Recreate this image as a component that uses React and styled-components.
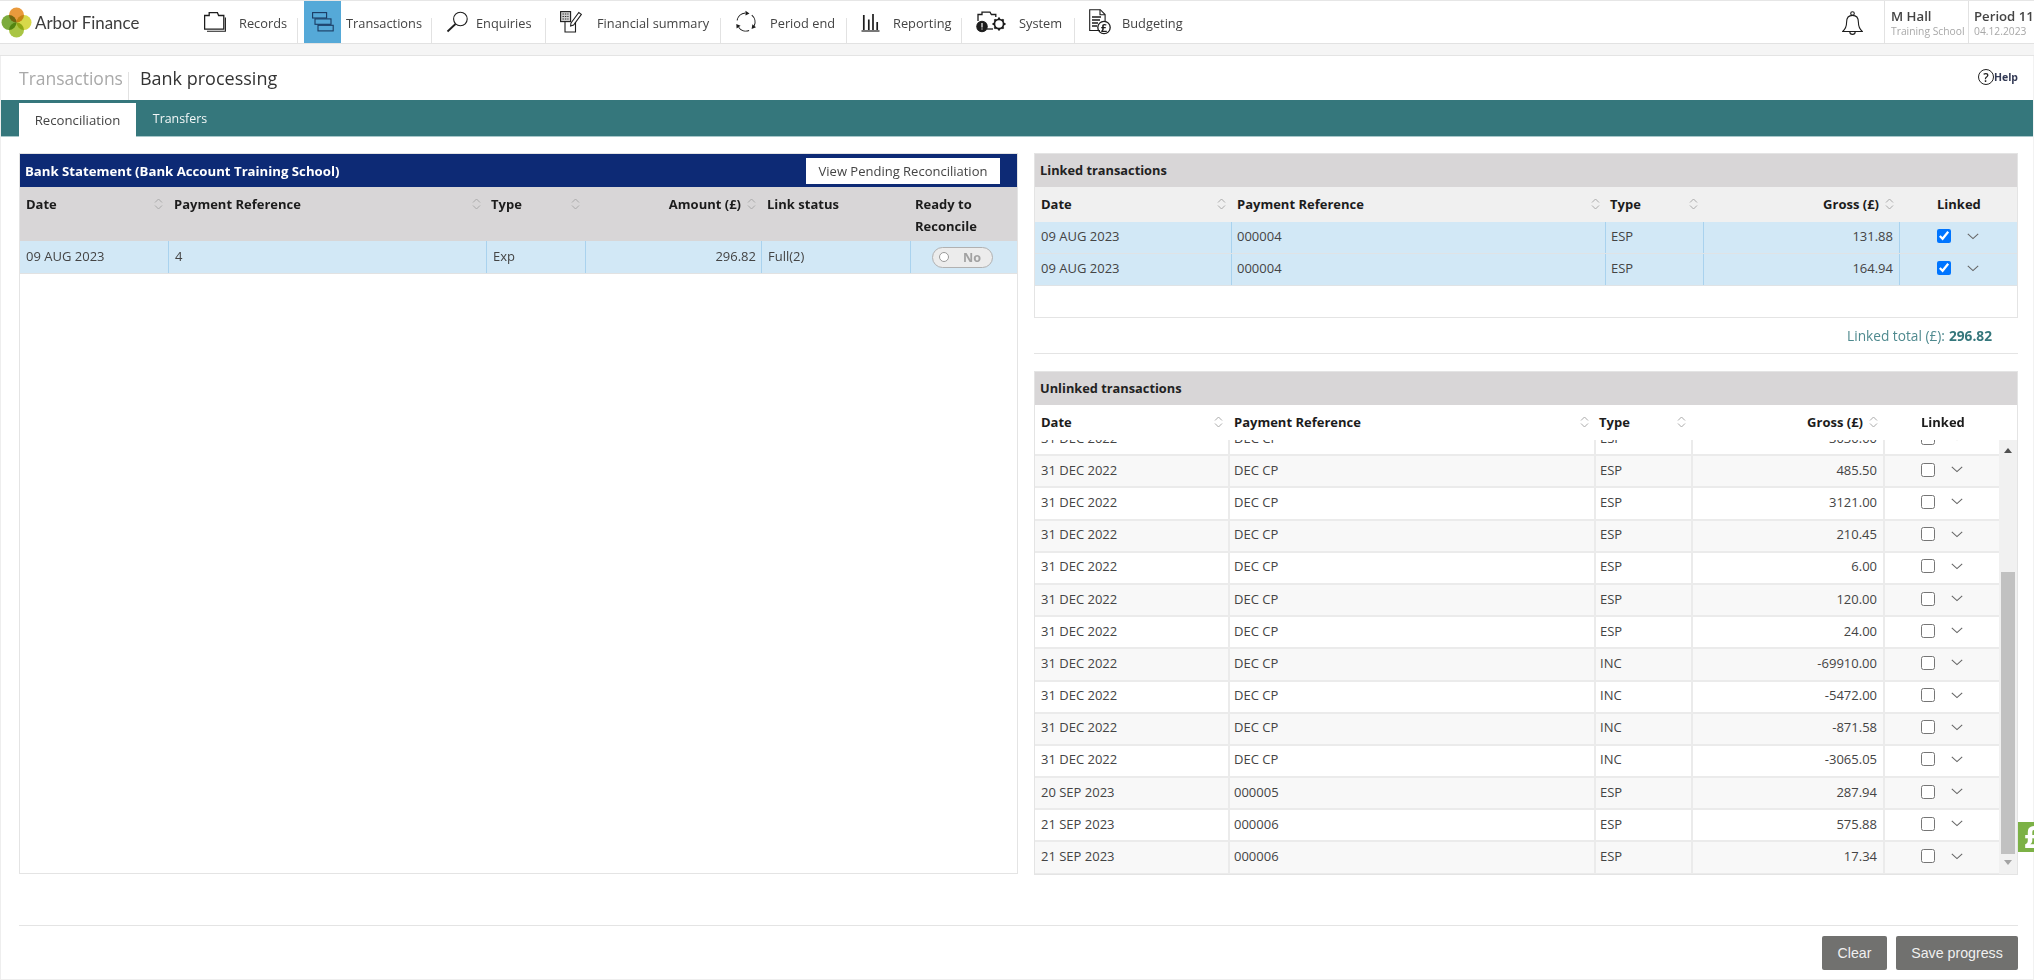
import React from "react";
import styled, { createGlobalStyle } from "styled-components";

const Global = createGlobalStyle`
  html, body { margin: 0; padding: 0; background: #fff; }
  body { font-family: "Open Sans", "Noto Sans", sans-serif; font-size: 13px; color: #333; }
  * { box-sizing: border-box; }
`;

const Page = styled.div`
  position: relative;
  width: 2034px;
  height: 980px;
  overflow: hidden;
  display: flex;
  flex-direction: column;
`;

/* ---------- top navigation ---------- */
const TopBar = styled.header`
  height: 44px;
  flex: none;
  display: flex;
  background: #fff;
  border-top: 1px solid #e6e6e6;
  border-bottom: 1px solid #e2e2e2;
`;
const Brand = styled.div`
  width: 190px;
  flex: none;
  display: flex;
  align-items: center;
  gap: 3px;
  padding-left: 1px;
  font-family: "Lato", "Open Sans", sans-serif;
  font-size: 16.9px;
  color: #3d3d3d;
`;
const NavItem = styled.div`
  width: ${(p) => p.$w}px;
  flex: none;
  height: 42px;
  display: flex;
  align-items: center;
  gap: ${(p) => p.$gap ?? 13}px;
  padding-left: ${(p) => p.$pad ?? 14}px;
  position: relative;
  font-size: 12.8px;
  color: #444;
  white-space: nowrap;
  &::after {
    content: "";
    display: ${(p) => (p.$last ? "none" : "block")};
    position: absolute;
    right: 0;
    top: 17px;
    bottom: 0;
    width: 1px;
    background: #e2e2e2;
  }
`;
const NavLabel = styled.span`
  padding-top: 2px;
`;
const ActiveIcon = styled.span`
  width: 37px;
  height: 42px;
  background: #55a9d8;
  display: flex;
  align-items: center;
  justify-content: center;
`;
const Spacer = styled.div`
  flex: 1;
`;
const BellBox = styled.div`
  width: 42px;
  display: flex;
  align-items: center;
  justify-content: flex-start;
  padding-top: 3px;
`;
const UserBlock = styled.div`
  width: ${(p) => p.$w}px;
  flex: none;
  border-left: 1px solid #e2e2e2;
  padding: 6px 0 0 ${(p) => p.$pad}px;
  display: flex;
  flex-direction: column;
  white-space: nowrap;
`;
const UserName = styled.span`
  font-size: 13.2px;
  font-weight: 600;
  line-height: 18px;
  color: #444;
`;
const UserSub = styled.span`
  font-size: 10.3px;
  line-height: 12px;
  color: #a8a8a8;
`;
const Band = styled.div`
  height: 12px;
  flex: none;
  background: #f5f5f5;
  border-bottom: 1px solid #e4e4e4;
`;

/* ---------- title + tabs ---------- */
const Content = styled.div`
  flex: 1;
  display: flex;
  flex-direction: column;
  border-left: 1px solid #eee;
  border-right: 1px solid #f2f2f2;
  border-bottom: 1px solid #eee;
`;
const TitleRow = styled.div`
  height: 44px;
  flex: none;
  display: flex;
  align-items: flex-end;
  padding: 0 15px 0 18px;
`;
const Crumb = styled.span`
  font-size: 17.5px;
  line-height: 13px;
  height: 28px;
  color: #a9a9a9;
  border-right: 1px solid #e2e2e2;
  padding-right: 5px;
`;
const PageTitle = styled.h1`
  margin: 0 0 0 11px;
  font-size: 18px;
  line-height: 13px;
  height: 28px;
  font-weight: 400;
  color: #333;
`;
const Help = styled.div`
  margin-left: auto;
  align-self: flex-end;
  margin-bottom: 15px;
  display: flex;
  align-items: center;
  font-family: "Open Sans", sans-serif;
  font-weight: 700;
  font-size: 10.5px;
  color: #333a55;
`;
const HelpMark = styled.span`
  width: 16px;
  height: 16px;
  border: 1.5px solid #222;
  border-radius: 50%;
  display: flex;
  align-items: center;
  justify-content: center;
  font-size: 12px;
  font-weight: 600;
  color: #222;
`;
const TabBar = styled.nav`
  height: 37px;
  flex: none;
  background: #35777c;
  border-bottom: 1px solid #a8c8ca;
  padding: 3px 0 0 18px;
  display: flex;
`;
const Tab = styled.div`
  width: ${(p) => p.$w}px;
  height: 34px;
  display: flex;
  align-items: center;
  justify-content: center;
  font-size: ${(p) => (p.$active ? 13.2 : 12.4)}px;
  padding-bottom: ${(p) => (p.$active ? 0 : 4)}px;
  background: ${(p) => (p.$active ? "#fff" : "transparent")};
  color: ${(p) => (p.$active ? "#444" : "#f2f7f7")};
`;

/* ---------- panels ---------- */
const Main = styled.main`
  flex: 1;
  display: grid;
  grid-template-columns: 999px 984px;
  column-gap: 16px;
  padding: 16px 15px 0 18px;
  align-content: start;
`;
const LeftPanel = styled.section`
  height: 721px;
  border: 1px solid #e4e4e4;
  background: #fff;
`;
const RightColumn = styled.div`
  display: flex;
  flex-direction: column;
`;
const Panel = styled.section`
  border: 1px solid #e4e4e4;
  height: ${(p) => p.$h}px;
  background: #fff;
  overflow: hidden;
`;
const PanelTitle = styled.div`
  height: ${(p) => p.$h || 33}px;
  display: flex;
  align-items: center;
  justify-content: space-between;
  padding: 0 17px ${(p) => (p.$navy ? 0 : 2)}px 5px;
  background: ${(p) => (p.$navy ? "#0d2a75" : "#d8d6d7")};
  color: ${(p) => (p.$navy ? "#fff" : "#222")};
  font-weight: 700;
  font-size: ${(p) => (p.$navy ? 13.2 : 12.8)}px;
`;
const PendingButton = styled.button`
  width: 194px;
  height: 26px;
  border: 0;
  background: #fff;
  color: #444;
  font: 400 13px "Open Sans", sans-serif;
  padding: 0;
`;
const HeadRow = styled.div`
  display: grid;
  grid-template-columns: ${(p) => p.$cols};
  height: ${(p) => p.$h}px;
  background: ${(p) => p.$bg};
`;
const HeadCell = styled.div`
  display: flex;
  align-items: flex-start;
  justify-content: ${(p) => (p.$right ? "flex-end" : "space-between")};
  gap: 6px;
  padding: 6px 5px 0 ${(p) => p.$pad ?? 6}px;
  font-weight: 700;
  font-size: 13px;
  line-height: 22px;
  color: #1c1c1c;
  white-space: ${(p) => (p.$wrap ? "normal" : "nowrap")};
`;
const CenterHead = styled(HeadCell)`
  padding-left: 38px;
  justify-content: flex-start;
`;
const Row = styled.div`
  display: grid;
  grid-template-columns: ${(p) => p.$cols};
  height: ${(p) => p.$h}px;
  align-items: stretch;
  background: ${(p) => p.$bg};
  border-bottom: ${(p) => p.$lineW ?? 1}px solid ${(p) => p.$line};
`;
const Cell = styled.div`
  display: flex;
  align-items: center;
  justify-content: ${(p) => (p.$right ? "flex-end" : "flex-start")};
  padding: 0 ${(p) => p.$rpad ?? 6}px 3px ${(p) => p.$pad ?? 6}px;
  border-left: ${(p) => (p.$first ? "0" : `${p.$sepW ?? 1}px solid ${p.$sep}`)};
  font-size: 13px;
  color: #444;
  white-space: nowrap;
`;
const ToggleCell = styled(Cell)`
  padding-left: 21px;
  padding-bottom: 0;
`;
const Toggle = styled.span`
  width: 61px;
  height: 21px;
  border: 1.5px solid #b1b1b1;
  border-radius: 11px;
  background: #ececec;
  display: flex;
  align-items: center;
  gap: 14px;
  padding-left: 6px;
  font-weight: 700;
  font-size: 12.6px;
  color: #a2a2a2;
`;
const Knob = styled.i`
  width: 10px;
  height: 10px;
  border-radius: 50%;
  border: 1.5px solid #9a9a9a;
  background: #fff;
`;
const ActionCell = styled(Cell)`
  padding-left: ${(p) => (p.$sepW ? 36 : 37)}px;
  gap: 16px;
`;
const Check = styled.input.attrs({ type: "checkbox", readOnly: true })`
  width: 14px;
  height: 14px;
  margin: 0;
`;
const TotalRow = styled.div`
  height: 36px;
  flex: none;
  border-bottom: 1px solid #e4e4e4;
  display: flex;
  align-items: center;
  justify-content: flex-end;
  padding: 0 26px 0 0;
  font-size: 13.7px;
  color: #4f8a8f;
  margin-bottom: 17px;
`;
const TotalValue = styled.b`
  color: #35777c;
  margin-left: 4px;
`;
const Scroller = styled.div`
  display: flex;
  height: 436px;
`;
const RowsClip = styled.div`
  flex: 1;
  overflow: hidden;
`;
const Rows = styled.div`
  margin-top: -16px;
`;
const Track = styled.div`
  width: 18px;
  flex: none;
  background: #f1f1f1;
  display: flex;
  flex-direction: column;
  align-items: center;
  padding-top: 8px;
`;
const ArrowUp = styled.i`
  border-left: 4px solid transparent;
  border-right: 4px solid transparent;
  border-bottom: 5px solid #505050;
`;
const ArrowDown = styled.i`
  border-left: 4px solid transparent;
  border-right: 4px solid transparent;
  border-top: 5px solid #a3a3a3;
  margin-top: 6px;
`;
const Thumb = styled.div`
  width: 14px;
  height: 282px;
  background: #c1c1c1;
  margin-top: 119px;
`;
const Footer = styled.footer`
  margin: 0 15px 0 18px;
  flex: none;
  height: 54px;
  border-top: 1px solid #e4e4e4;
  padding-top: 10px;
  display: flex;
  justify-content: flex-end;
  gap: 9px;
`;
const FooterButton = styled.button`
  width: ${(p) => p.$w}px;
  height: 34px;
  border: 0;
  border-radius: 2px;
  background: #71716f;
  color: #f0f0f0;
  font: 400 14.2px "Liberation Sans", Arial, sans-serif;
  padding: 0;
`;
const MoneyTab = styled.div`
  position: absolute;
  right: 0;
  top: 822px;
  width: 16px;
  height: 30px;
  background: #7cb146;
  color: #fff;
  font: 700 30px/30px "Open Sans", sans-serif;
  padding-left: 6px;
  overflow: hidden;
`;

/* ---------- drawings ---------- */
const Sort = () => (
  <svg width="9" height="12" viewBox="0 0 9 12" fill="none" stroke="#aaa" strokeWidth="1" style={{ flex: "none", marginTop: 5 }}>
    <path d="M1 4.5 4.5 1 8 4.5M1 7.5 4.5 11 8 7.5" />
  </svg>
);
const Chevron = () => (
  <svg width="12" height="7" viewBox="0 0 12 7" fill="none" stroke="#666" strokeWidth="1.1">
    <path d="M.8.8 6 5.6 11.2.8" />
  </svg>
);
const Logo = () => (
  <svg width="31" height="31" viewBox="0 0 31 31" style={{ flex: "none" }}>
    <g style={{ mixBlendMode: "multiply" }}>
      <circle cx="15.5" cy="8" r="7.5" fill="#ea9a3c" />
    </g>
    <g style={{ mixBlendMode: "multiply" }}>
      <circle cx="8" cy="15.5" r="7.5" fill="#7cab3c" />
    </g>
    <g style={{ mixBlendMode: "multiply" }}>
      <circle cx="23" cy="15.5" r="7.5" fill="#d7d84a" />
    </g>
    <g style={{ mixBlendMode: "multiply" }}>
      <circle cx="15.5" cy="23" r="7.5" fill="#a9c544" />
    </g>
  </svg>
);
const Ic = (w, h, children) => (
  <svg width={w} height={h} viewBox={`0 0 ${w} ${h}`} fill="none" stroke="#1d1d1d" strokeWidth="1.1" style={{ flex: "none" }}>
    {children}
  </svg>
);
const RecordsIcon = () =>
  Ic(22, 20, <>
    <path d="M.6 3.5h4.6V.6h8.2l1.2 2.9h5.2v13.6H.6z" strokeWidth="1.3" />
    <path d="M21.4 5.4v13.9H3" strokeWidth="1.1" />
  </>);
const TransactionsIcon = () => (
  <svg width="22" height="20" viewBox="0 0 22 20" fill="none" stroke="#1b3b63" strokeWidth="1.1">
    <rect x=".6" y=".6" width="14" height="5.4" />
    <rect x="3" y="6.9" width="16" height="5.4" />
    <rect x="6" y="13.3" width="15.2" height="5.6" />
  </svg>
);
const EnquiriesIcon = () =>
  Ic(22, 22, <>
    <circle cx="14.4" cy="8" r="6.8" />
    <path d="M9.5 13 1.5 20.5" strokeWidth="1.8" />
  </>);
const SummaryIcon = () =>
  Ic(22, 22, <>
    <rect x=".6" y=".6" width="10" height="10" fill="#cfcfcf" />
    <path d="M2.5 3h6M2.5 5.5h6M2.5 8h6" stroke="#333" strokeDasharray="1.4 1" />
    <path d="M5 10.6V21h10.5V11" />
    <path d="M11 12 18.8 1.5l2.6 1.9-7.8 10.6-3 1z" />
  </>);
const PeriodIcon = () =>
  Ic(22, 24, <>
    <path d="M2.1 10.4A9 9 0 0 1 10.2 3" />
    <path d="M16.8 5.1A9 9 0 0 1 19.2 15.8" />
    <path d="M14.1 20.5A9 9 0 0 1 3.6 17.2" />
    <path d="M14.5 3.4 10.5.8v4.8zM16.6 18.9 21 17.3l-3.6-3zM1.3 13.9l.3 4.7 4-2.8z" fill="#1d1d1d" stroke="none" />
  </>);
const ReportingIcon = () =>
  Ic(19, 20, <>
    <path d="M.5 19h18" strokeWidth="1.2" />
    <path d="M2.8 3v15M7.8 7.5V18M12 2v16M16.2 10v8" strokeWidth="1.7" />
  </>);
const SystemIcon = () =>
  Ic(31, 22, <>
    <path d="M2 10V3.5h4V1.2h8l1.4 2.3h4.4V6" strokeWidth="1.3" />
    <path d="M11 18h6" strokeWidth="1.3" />
    <circle cx="23" cy="13" r="4.6" strokeWidth="1.8" />
    <path d="M23 6.5v2M23 17.5v2M16.5 13h2M27.5 13h2M18.4 8.4l1.4 1.4M26.2 16.2l1.4 1.4M27.6 8.4l-1.4 1.4M19.8 16.2l-1.4 1.4" strokeWidth="2" />
    <circle cx="6" cy="15.5" r="5.2" fill="#1d1d1d" />
    <path d="M6 12v4.5M6 17.6v1" stroke="#fff" strokeWidth="1.2" />
  </>);
const BudgetIcon = () =>
  Ic(22, 26, <>
    <path d="M11 21.5H.7V.7h10.6l4.8 4.8v6.5" />
    <path d="M11 .7v5h5" />
    <path d="M3 8h9M3 11h8M3 14h6M3 17h5" strokeWidth="1.3" />
    <circle cx="15" cy="18.5" r="6.2" strokeWidth="1.3" />
    <text x="15" y="22.5" fontSize="11" fontWeight="700" textAnchor="middle" fill="#1d1d1d" stroke="none" fontFamily="Open Sans">£</text>
  </>);
const BellIcon = () =>
  Ic(21, 25, <>
    <circle cx="10.5" cy="2.6" r="1.8" />
    <path d="M10.5 4.4C6.4 4.4 4.6 7.3 4.6 11.3c0 5-1.4 7-3.9 9.2h19.6c-2.5-2.2-3.9-4.2-3.9-9.2 0-4-1.8-6.9-5.9-6.9z" />
    <path d="M7.8 20.7a2.7 2.7 0 0 0 5.4 0" />
  </>);

/* ---------- data ---------- */
const leftCols = "148px 318px 99px 176px 149px 107px";
const linkedCols = "196px 374px 98px 196px 118px";
const unlinkedCols = "193px 366px 97px 192px 116px";

const unlinked = [
  ["31 DEC 2022", "DEC CP", "ESP", "3030.00"],
  ["31 DEC 2022", "DEC CP", "ESP", "485.50"],
  ["31 DEC 2022", "DEC CP", "ESP", "3121.00"],
  ["31 DEC 2022", "DEC CP", "ESP", "210.45"],
  ["31 DEC 2022", "DEC CP", "ESP", "6.00"],
  ["31 DEC 2022", "DEC CP", "ESP", "120.00"],
  ["31 DEC 2022", "DEC CP", "ESP", "24.00"],
  ["31 DEC 2022", "DEC CP", "INC", "-69910.00"],
  ["31 DEC 2022", "DEC CP", "INC", "-5472.00"],
  ["31 DEC 2022", "DEC CP", "INC", "-871.58"],
  ["31 DEC 2022", "DEC CP", "INC", "-3065.05"],
  ["20 SEP 2023", "000005", "ESP", "287.94"],
  ["21 SEP 2023", "000006", "ESP", "575.88"],
  ["21 SEP 2023", "000006", "ESP", "17.34"],
];
const linked = [
  ["09 AUG 2023", "000004", "ESP", "131.88"],
  ["09 AUG 2023", "000004", "ESP", "164.94"],
];
const nav = [
  ["Records", 108, <RecordsIcon />, 13],
  ["Transactions", 134, null, 5],
  ["Enquiries", 114, <EnquiriesIcon />, 8],
  ["Financial summary", 175, <SummaryIcon />, 15],
  ["Period end", 126, <PeriodIcon />, 13],
  ["Reporting", 115, <ReportingIcon />, 13],
  ["System", 113, <SystemIcon />, 12],
  ["Budgeting", 120, <BudgetIcon />, 11],
];

const TxRow = ({ cols, h, bg, line, lineW, sep, sepW, data, checked }) => (
  <Row $cols={cols} $h={h} $bg={bg} $line={line} $lineW={lineW}>
    <Cell $first $pad={6}>{data[0]}</Cell>
    <Cell $sep={sep} $sepW={sepW} $pad={sepW ? 4 : 5}>{data[1]}</Cell>
    <Cell $sep={sep} $sepW={sepW} $pad={sepW ? 4 : 5}>{data[2]}</Cell>
    <Cell $sep={sep} $sepW={sepW} $right>{data[3]}</Cell>
    <ActionCell $sep={sep} $sepW={sepW}>
      <Check checked={checked} />
      <Chevron />
    </ActionCell>
  </Row>
);

export default function App() {
  return (
    <Page>
      <Global />
      <TopBar>
        <Brand>
          <Logo />
          Arbor Finance
        </Brand>
        {nav.map(([label, w, icon, gap], i) =>
          icon ? (
            <NavItem key={label} $w={w} $gap={gap} $last={i === nav.length - 1}>
              {icon}
              <NavLabel>{label}</NavLabel>
            </NavItem>
          ) : (
            <NavItem key={label} $w={w} $gap={gap} $pad={6}>
              <ActiveIcon>
                <TransactionsIcon />
              </ActiveIcon>
              <NavLabel>{label}</NavLabel>
            </NavItem>
          )
        )}
        <Spacer />
        <BellBox>
          <BellIcon />
        </BellBox>
        <UserBlock $w={84} $pad={6}>
          <UserName>M Hall</UserName>
          <UserSub>Training School</UserSub>
        </UserBlock>
        <UserBlock $w={66} $pad={5}>
          <UserName>Period 11</UserName>
          <UserSub>04.12.2023</UserSub>
        </UserBlock>
      </TopBar>
      <Band />
      <Content>
        <TitleRow>
          <Crumb>Transactions</Crumb>
          <PageTitle>Bank processing</PageTitle>
          <Help>
            <HelpMark>?</HelpMark>
            Help
          </Help>
        </TitleRow>
        <TabBar>
          <Tab $active $w={117}>Reconciliation</Tab>
          <Tab $w={88}>Transfers</Tab>
        </TabBar>
        <Main>
          <LeftPanel>
            <PanelTitle $navy $h={33}>
              Bank Statement (Bank Account Training School)
              <PendingButton>View Pending Reconciliation</PendingButton>
            </PanelTitle>
            <HeadRow $cols={leftCols} $h={54} $bg="#d8d6d7">
              <HeadCell>Date<Sort /></HeadCell>
              <HeadCell>Payment Reference<Sort /></HeadCell>
              <HeadCell $pad={5}>Type<Sort /></HeadCell>
              <HeadCell $right>Amount (£)<Sort /></HeadCell>
              <HeadCell>Link status</HeadCell>
              <HeadCell $pad={5} $wrap>Ready to Reconcile</HeadCell>
            </HeadRow>
            <Row $cols={leftCols} $h={33} $bg="#d2e8f6" $line="#e2e2e2">
              <Cell $first>09 AUG 2023</Cell>
              <Cell $sep="#a9d2ee">4</Cell>
              <Cell $sep="#a9d2ee">Exp</Cell>
              <Cell $sep="#a9d2ee" $right $rpad={5}>296.82</Cell>
              <Cell $sep="#a9d2ee">Full(2)</Cell>
              <ToggleCell $sep="#a9d2ee">
                <Toggle><Knob />No</Toggle>
              </ToggleCell>
            </Row>
          </LeftPanel>
          <RightColumn>
            <Panel $h={165}>
              <PanelTitle>Linked transactions</PanelTitle>
              <HeadRow $cols={linkedCols} $h={35} $bg="#f0f0f0">
                <HeadCell>Date<Sort /></HeadCell>
                <HeadCell>Payment Reference<Sort /></HeadCell>
                <HeadCell $pad={5}>Type<Sort /></HeadCell>
                <HeadCell $right>Gross (£)<Sort /></HeadCell>
                <CenterHead>Linked</CenterHead>
              </HeadRow>
              {linked.map((d, i) => (
                <TxRow key={i} cols={linkedCols} h={32} bg="#d2e8f6" line="#dfe3e6" sep="#a9d2ee" data={d} checked />
              ))}
            </Panel>
            <TotalRow>
              Linked total (£):<TotalValue>296.82</TotalValue>
            </TotalRow>
            <Panel $h={504}>
              <PanelTitle>Unlinked transactions</PanelTitle>
              <HeadRow $cols={unlinkedCols + " 18px"} $h={35} $bg="#fff">
                <HeadCell>Date<Sort /></HeadCell>
                <HeadCell>Payment Reference<Sort /></HeadCell>
                <HeadCell $pad={5}>Type<Sort /></HeadCell>
                <HeadCell $right>Gross (£)<Sort /></HeadCell>
                <CenterHead>Linked</CenterHead>
              </HeadRow>
              <Scroller>
                <RowsClip>
                  <Rows>
                    {unlinked.map((d, i) => (
                      <TxRow
                        key={i}
                        cols={unlinkedCols}
                        h={32.2}
                        bg={i % 2 ? "#f8f8f8" : "#fff"}
                        line="#ebebeb"
                        lineW={2}
                        sep="#ebebeb"
                        sepW={2}
                        data={d}
                        checked={false}
                      />
                    ))}
                  </Rows>
                </RowsClip>
                <Track>
                  <ArrowUp />
                  <Thumb />
                  <ArrowDown />
                </Track>
              </Scroller>
            </Panel>
          </RightColumn>
        </Main>
        <Footer>
          <FooterButton $w={65}>Clear</FooterButton>
          <FooterButton $w={122}>Save progress</FooterButton>
        </Footer>
      </Content>
      <MoneyTab>£</MoneyTab>
    </Page>
  );
}
